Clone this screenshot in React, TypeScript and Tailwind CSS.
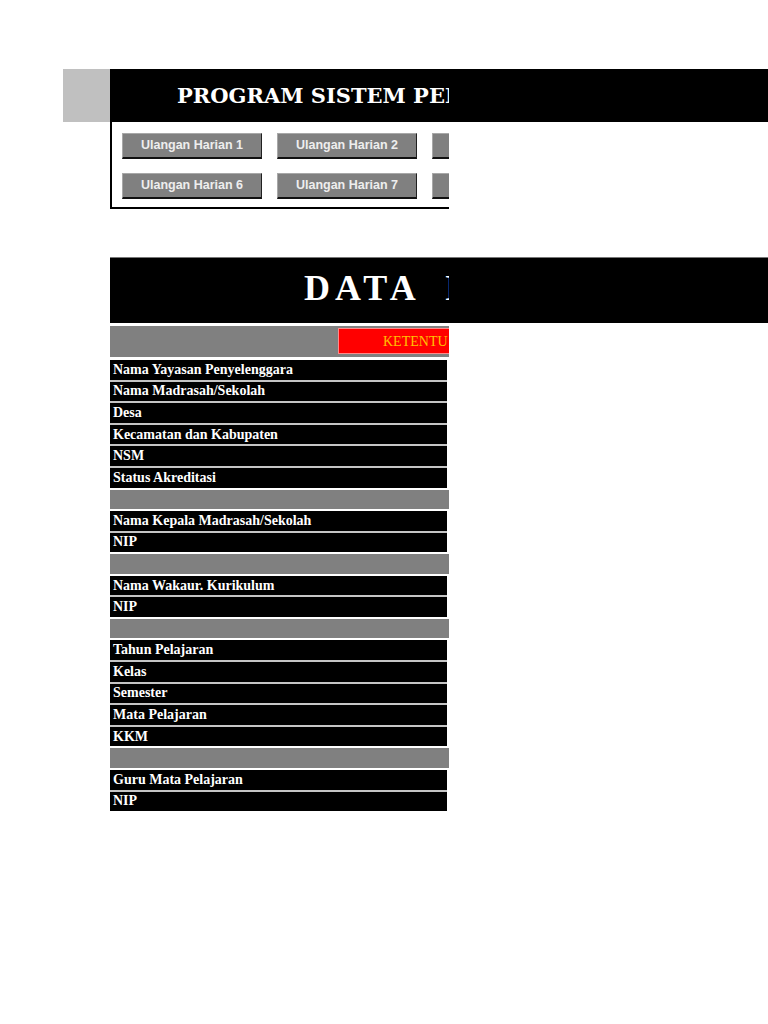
import React from "react";

type Row = { label: string; kind: "data" | "blank" };

const rows: Row[] = [
  { label: "Nama Yayasan Penyelenggara", kind: "data" },
  { label: "Nama Madrasah/Sekolah", kind: "data" },
  { label: "Desa", kind: "data" },
  { label: "Kecamatan dan Kabupaten", kind: "data" },
  { label: "NSM", kind: "data" },
  { label: "Status Akreditasi", kind: "data" },
  { label: "", kind: "blank" },
  { label: "Nama Kepala Madrasah/Sekolah", kind: "data" },
  { label: "NIP", kind: "data" },
  { label: "", kind: "blank" },
  { label: "Nama Wakaur. Kurikulum", kind: "data" },
  { label: "NIP", kind: "data" },
  { label: "", kind: "blank" },
  { label: "Tahun Pelajaran", kind: "data" },
  { label: "Kelas", kind: "data" },
  { label: "Semester", kind: "data" },
  { label: "Mata Pelajaran", kind: "data" },
  { label: "KKM", kind: "data" },
  { label: "", kind: "blank" },
  { label: "Guru Mata Pelajaran", kind: "data" },
  { label: "NIP", kind: "data" },
];

const buttonRows = [
  ["Ulangan Harian 1", "Ulangan Harian 2", "Ulangan Harian 3"],
  ["Ulangan Harian 6", "Ulangan Harian 7", "Ulangan Harian 8"],
];

function SheetButton({ label }: { label: string }) {
  return (
    <div className="w-[140px] h-[26px] shrink-0 bg-[#808080] border-t border-l border-[#a8a8a8] border-r border-r-[#202020] border-b-2 border-b-[#111] flex items-center justify-center pb-[1px] text-[12.5px] font-bold text-[#eeeeee] font-['Liberation_Sans',Arial,sans-serif]">
      {label}
    </div>
  );
}

export default function App() {
  return (
    <div className="min-h-screen bg-white pt-[69px] font-['Liberation_Serif','Times_New_Roman',serif]">
      {/* top title bar */}
      <div className="flex h-[53px]">
        <div className="w-[63px] shrink-0" />
        <div className="w-[47px] shrink-0 bg-[#c0c0c0]" />
        <div className="flex-1 bg-black flex items-center">
          <div className="w-[339px] overflow-hidden whitespace-nowrap pl-[67px] text-white font-bold text-[21px] font-['DejaVu_Serif',serif]">
            PROGRAM SISTEM PEN
          </div>
        </div>
      </div>

      {/* ulangan harian buttons */}
      <div className="ml-[110px] w-[339px] overflow-hidden">
        <div className="w-[520px] border-l-2 border-b-2 border-black pl-[10px] pt-[11px] pb-[8px] flex flex-col gap-[14px]">
          {buttonRows.map((r, i) => (
            <div key={i} className="flex gap-[15px]">
              {r.map((b) => (
                <SheetButton key={b} label={b} />
              ))}
            </div>
          ))}
        </div>
      </div>

      {/* data header */}
      <div className="mt-[48px] flex h-[66px]">
        <div className="w-[110px] shrink-0" />
        <div className="flex-1 bg-black border-t border-[#777] flex items-center">
          <div className="w-[339px] overflow-hidden whitespace-nowrap pl-[194px] pb-[6px] text-white font-bold text-[36px] tracking-[5px]">
            DATA<span className="ml-[24px]">I</span>
          </div>
        </div>
      </div>

      <div className="ml-[110px] w-[339px] overflow-hidden">
        <div className="mt-[3px] h-[31px] bg-[#808080] pt-[2px] pl-[228px]">
          <div className="w-[240px] h-[26px] bg-[#ff0000] border border-[#ff8a8a] flex items-center pl-[44px] whitespace-nowrap text-[14px] text-[#ffc000]">
            KETENTU
          </div>
        </div>

        <div className="flex flex-col pt-[1px] pb-[2px]">
          {rows.map((row, i) => {
            const prevData = i > 0 && rows[i - 1].kind === "data";
            if (row.kind === "blank") {
              return <div key={i} className="mt-[2px] h-[19.5px] w-[339px] bg-[#808080]" />;
            }
            return (
              <div
                key={i}
                className={
                  prevData
                    ? "h-[21.6px] w-[337px] bg-black border-t-2 border-[#c4c4c4] flex items-center pl-[3px] text-[14px] font-bold text-white leading-none"
                    : "mt-[2px] h-[19.6px] w-[337px] bg-black flex items-center pl-[3px] text-[14px] font-bold text-white leading-none"
                }
              >
                {row.label}
              </div>
            );
          })}
        </div>
      </div>
    </div>
  );
}
